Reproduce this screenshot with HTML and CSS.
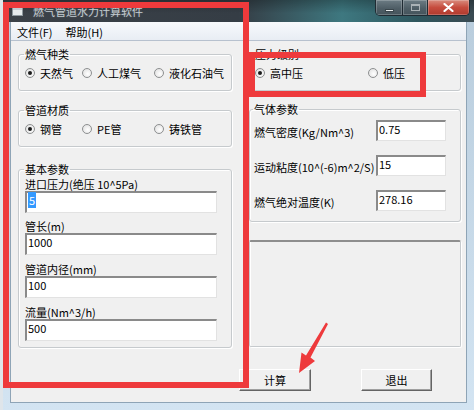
FILE: index.html
```html
<!DOCTYPE html>
<html lang="zh-CN">
<head>
  <meta charset="UTF-8">
  <title>燃气管道水力计算软件</title>
  <link rel="stylesheet" href="styles.css">
</head>
<body>
  <div class="screen">
    <div class="window">
      <div class="titlebar">
        <svg class="app-icon" width="11" height="9" viewBox="0 0 11 9">
          <rect x="0.5" y="0.5" width="10" height="8" fill="#e6eaec" stroke="#8f999f"/>
          <rect x="1" y="1" width="9" height="2" fill="#c2ccd2"/>
        </svg>
        <span class="title">燃气管道水力计算软件</span>
        <div class="caption">
          <span class="cap cap-min"><i></i></span>
          <span class="cap cap-max"><i></i></span>
          <span class="cap cap-close">
            <svg width="11" height="9" viewBox="0 0 11 9">
              <path d="M1.5 1 L9.5 8 M9.5 1 L1.5 8" stroke="#fff" stroke-width="2.2" stroke-linecap="round"/>
            </svg>
          </span>
        </div>
      </div>

      <div class="frame">
        <div class="client">
          <div class="menubar">
            <span>文件(F)</span>
            <span>帮助(H)</span>
          </div>

          <div class="panes">
            <div class="col col-left">
              <fieldset class="group">
                <legend>燃气种类</legend>
                <div class="radios radios-3">
                  <span class="opt"><i class="radio on"></i>天然气</span>
                  <span class="opt"><i class="radio"></i>人工煤气</span>
                  <span class="opt"><i class="radio"></i>液化石油气</span>
                </div>
              </fieldset>

              <fieldset class="group group-pipe">
                <legend>管道材质</legend>
                <div class="radios radios-3">
                  <span class="opt"><i class="radio on"></i>钢管</span>
                  <span class="opt"><i class="radio"></i>PE管</span>
                  <span class="opt"><i class="radio"></i>铸铁管</span>
                </div>
              </fieldset>

              <fieldset class="group group-basic">
                <legend>基本参数</legend>
                <div class="field">
                  <label>进口压力(绝压 10^5Pa)</label>
                  <div class="textbox"><span class="selected">5</span></div>
                </div>
                <div class="field">
                  <label>管长(m)</label>
                  <div class="textbox">1000</div>
                </div>
                <div class="field">
                  <label>管道内径(mm)</label>
                  <div class="textbox">100</div>
                </div>
                <div class="field">
                  <label>流量(Nm^3/h)</label>
                  <div class="textbox">500</div>
                </div>
              </fieldset>
            </div>

            <div class="col col-right">
              <fieldset class="group group-pressure">
                <legend>压力级别</legend>
                <div class="radios radios-2">
                  <span class="opt"><i class="radio on"></i>高中压</span>
                  <span class="opt"><i class="radio"></i>低压</span>
                </div>
              </fieldset>

              <fieldset class="group group-gas">
                <legend>气体参数</legend>
                <div class="row">
                  <label>燃气密度(Kg/Nm^3)</label>
                  <div class="textbox textbox-short">0.75</div>
                </div>
                <div class="row">
                  <label>运动粘度(10^(-6)m^2/S)</label>
                  <div class="textbox textbox-short">15</div>
                </div>
                <div class="row">
                  <label>燃气绝对温度(K)</label>
                  <div class="textbox textbox-short">278.16</div>
                </div>
              </fieldset>

              <div class="blank-box"></div>
            </div>
          </div>

          <div class="actions">
            <button class="btn">计算</button>
            <button class="btn btn-exit">退出</button>
          </div>
        </div>
      </div>
    </div>

    <!-- red annotation marks drawn over the screenshot -->
    <div class="mark mark-left"></div>
    <div class="mark mark-pressure"></div>
    <svg class="arrow" width="474" height="410" viewBox="0 0 474 410">
      <polygon points="328,324 310.5,357.5 315,361 299,373 301.5,352.5 306,355.5 326,322.5" fill="#ee3a3c"/>
    </svg>
  </div>
</body>
</html>
```

FILE: styles.css
```css
* {
  box-sizing: border-box;
}

body {
  margin: 0;
  font-family: "Noto Sans CJK SC", "Noto Sans", sans-serif;
  font-size: 11px;
  color: #000;
  background: #dde4ea;
}

.screen {
  position: relative;
  width: 474px;
  height: 410px;
  overflow: hidden;
  background: #dfe5ea;
}

/* Window frame */
.window {
  margin-left: 3px;
  width: 471px;
  height: 410px;
  display: flex;
  flex-direction: column;
}

.titlebar {
  height: 22px;
  flex: none;
  display: flex;
  align-items: center;
  padding-left: 9px;
  background:
    linear-gradient(180deg, rgba(0, 0, 0, 0.25), rgba(0, 0, 0, 0) 60%),
    linear-gradient(90deg, #3b4148 0%, #353d45 50%, #3e7880 72%, #2e565e 88%, #3a4a52 100%);
}

.app-icon {
  flex: none;
  margin-top: 1px;
}

.title {
  margin-left: 10px;
  color: #c3ccd1;
  line-height: 14px;
  text-shadow: 0 0 2px rgba(255, 255, 255, 0.2);
}

.caption {
  margin-left: auto;
  margin-right: 4px;
  align-self: flex-start;
  display: flex;
  height: 16px;
  border: 1px solid #1f2b33;
  border-top: none;
  border-radius: 0 0 5px 5px;
  overflow: hidden;
}

.cap {
  display: flex;
  align-items: center;
  justify-content: center;
  height: 100%;
  background: linear-gradient(180deg, #6c7c84, #4f5e66 55%, #45545c);
  box-shadow: inset 0 0 0 1px rgba(255, 255, 255, 0.22);
}

.cap + .cap {
  border-left: 1px solid #1f2b33;
}

.cap-min {
  width: 26px;
}

.cap-min i {
  display: block;
  width: 9px;
  height: 3px;
  margin-top: 6px;
  background: #e6eaec;
  border: 1px solid #3a464c;
}

.cap-max {
  width: 25px;
}

.cap-max i {
  display: block;
  width: 9px;
  height: 7px;
  border: 1px solid #aab2b6;
  border-top-width: 2px;
}

.cap-close {
  width: 42px;
  background: linear-gradient(180deg, #d98c7e, #c64c3e 50%, #b03a2e);
}

.frame {
  flex: 1;
  padding: 0 7px 7px 7px;
  background: linear-gradient(180deg, #b9cddd, #d3e4f2);
}

.client {
  height: 100%;
  background: #f0f0f0;
  border: 1px solid #8ea4b6;
  border-top: none;
}

/* Menu */
.menubar {
  height: 19px;
  display: flex;
  align-items: center;
  gap: 13px;
  padding: 2px 0 0 6px;
  background: linear-gradient(180deg, #f7f9fc, #e8edf4);
  border-bottom: 1px solid #b7c1ce;
}

/* Panes */
.panes {
  display: grid;
  grid-template-columns: 214px 212px;
  column-gap: 17px;
  padding: 6px 0 0 7px;
}

.col {
  display: flex;
  flex-direction: column;
}

.group {
  margin: 0;
  min-width: 0;
  border: 1px solid #c6cacd;
  border-radius: 3px;
  padding: 5px 14px 10px 6px;
  box-shadow: 1px 1px 0 #fff, inset 1px 1px 0 #fff;
}

.group legend {
  padding: 0 1px;
  margin-left: -1px;
  line-height: 14px;
}

.group-pipe {
  margin-top: 12px;
}

.group-basic {
  margin-top: 15px;
  padding-top: 2px;
  padding-bottom: 6px;
}

.group-pressure {
  padding-left: 5px;
}

.group-gas {
  margin-top: 11px;
  padding: 4px 14px 10px 4px;
}

/* Radio options */
.radios {
  display: grid;
  line-height: 14px;
}

.radios-3 {
  grid-template-columns: 57px 72px 1fr;
}

.radios-2 {
  grid-template-columns: 113px 1fr;
}

.opt {
  display: flex;
  align-items: center;
  gap: 5px;
  white-space: nowrap;
}

.radio {
  position: relative;
  flex: none;
  width: 10px;
  height: 10px;
  border-radius: 50%;
  border: 1px solid #8d8f90;
  background: radial-gradient(circle at 60% 60%, #ffffff, #dcdcdc);
}

.radio.on::after {
  content: '';
  position: absolute;
  left: 2px;
  top: 2px;
  width: 4px;
  height: 4px;
  border-radius: 50%;
  background: #1b1b1b;
}

/* Text boxes */
.field + .field {
  margin-top: 7px;
}

.field label {
  display: block;
  line-height: 13px;
}

.field:nth-child(n+4) {
  margin-top: 8px;
}

.textbox {
  height: 22px;
  padding: 0 1px;
  line-height: 14px;
  background: #fff;
  border-style: solid;
  border-width: 2px 1px 1px 2px;
  border-color: #8a8a8a #e2e2e2 #e2e2e2 #8a8a8a;
  white-space: nowrap;
}

.textbox .selected {
  background: #3399ff;
  color: #fff;
  padding: 0 1px;
}

.row {
  display: flex;
  align-items: center;
  justify-content: space-between;
  white-space: nowrap;
}

.row + .row {
  margin-top: 14px;
}

.row label {
  line-height: 14px;
  margin-top: 3px;
}

.textbox-short {
  width: 70px;
  height: 21px;
}

.blank-box {
  margin-top: 18px;
  height: 107px;
  border: 1px solid #c6cacd;
  border-top: 2px solid #8e8e8e;
  border-radius: 2px;
  box-shadow: 1px 1px 0 #fff, inset 1px 0 0 #fff;
}

/* Buttons */
.actions {
  display: flex;
  gap: 50px;
  padding-left: 228px;
  margin-top: 21px;
}

.btn {
  width: 72px;
  height: 22px;
  padding: 0;
  font: inherit;
  color: #000;
  background: #f0f0f0;
  border: 1px solid;
  border-color: #fff #646464 #646464 #fff;
  box-shadow: inset -1px -1px 0 #a0a0a0;
}

.btn-exit {
  width: 71px;
}

/* Red annotation marks */
.mark {
  position: absolute;
  border: 6px solid #ee3a3c;
}

.mark-left {
  left: 3px;
  top: 2px;
  width: 246px;
  height: 386px;
}

.mark-pressure {
  left: 249px;
  top: 52px;
  width: 177px;
  height: 45px;
}

.arrow {
  position: absolute;
  left: 0;
  top: 0;
  pointer-events: none;
}
```
